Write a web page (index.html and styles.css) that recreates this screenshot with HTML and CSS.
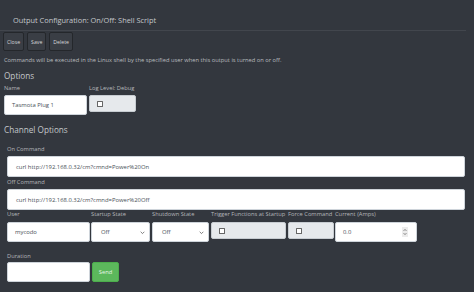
FILE: index.html
```html
<!DOCTYPE html>
<html>
<head>
<meta charset="utf-8">
<link rel="stylesheet" href="styles.css">
</head>
<body>
<div class="page">
  <div class="header">Output Configuration: On/Off: Shell Script</div>
  <div class="toolbar">
    <button class="btn">Close</button>
    <button class="btn">Save</button>
    <button class="btn">Delete</button>
  </div>
  <p class="desc">Commands will be executed in the Linux shell by the specified user when this output is turned on or off.</p>
  <h2 class="heading">Options</h2>
  <div class="row opts">
    <div class="field w-name">
      <label class="lbl">Name</label>
      <div class="input">Tasmota Plug 1</div>
    </div>
    <div class="field w-log">
      <label class="lbl">Log Level: Debug</label>
      <div class="check-box"><span class="cb"></span></div>
    </div>
  </div>
  <h2 class="heading h-channel">Channel Options</h2>
  <div class="channel">
    <label class="lbl l-on">On Command</label>
    <div class="input wide">curl http://192.168.0.32/cm?cmnd=Power%20On</div>
    <label class="lbl l-off">Off Command</label>
    <div class="input wide">curl http://192.168.0.32/cm?cmnd=Power%20Off</div>
    <div class="row fields">
      <div class="field w-user">
        <label class="lbl">User</label>
        <div class="input">mycodo</div>
      </div>
      <div class="field w-start">
        <label class="lbl">Startup State</label>
        <div class="input select">Off<svg class="chev" viewBox="0 0 6 4"><path d="M0.8 0.8 L3 3 L5.2 0.8" fill="none" stroke="#555" stroke-width="0.9"/></svg></div>
      </div>
      <div class="field w-shut">
        <label class="lbl">Shutdown State</label>
        <div class="input select">Off<svg class="chev" viewBox="0 0 6 4"><path d="M0.8 0.8 L3 3 L5.2 0.8" fill="none" stroke="#555" stroke-width="0.9"/></svg></div>
      </div>
      <div class="field w-trig">
        <label class="lbl">Trigger Functions at Startup</label>
        <div class="check-box"><span class="cb"></span></div>
      </div>
      <div class="field w-force">
        <label class="lbl">Force Command</label>
        <div class="check-box"><span class="cb"></span></div>
      </div>
      <div class="field w-cur">
        <label class="lbl">Current (Amps)</label>
        <div class="input number">0.0<span class="spin"><svg viewBox="0 0 6 10"><path d="M1.5 4 L3 2.3 L4.5 4 M1.5 6 L3 7.7 L4.5 6" fill="none" stroke="#777" stroke-width="0.8"/></svg></span></div>
      </div>
    </div>
    <label class="lbl l-dur">Duration</label>
    <div class="row dur">
      <div class="input w-user"></div>
      <button class="btn-send">Send</button>
    </div>
  </div>
</div>
</body>
</html>
```
FILE: styles.css
```css
html, body {
  margin: 0;
  padding: 0;
}
body {
  background: #33373e;
  font-family: "Open Sans", "DejaVu Sans", sans-serif;
  color: #b9bcc0;
  width: 474px;
  height: 292px;
  overflow: hidden;
}
.page {
  width: 466px;
}
.header {
  height: 31px;
  box-sizing: border-box;
  padding: 9px 0 0 13px;
  display: flex;
  align-items: center;
  font-size: 7.4px;
  color: #c4c7cb;
  border-bottom: 1px solid #42464d;
}
.toolbar {
  display: flex;
  gap: 3px;
  padding-left: 3px;
  margin-top: 1px;
}
.btn {
  height: 19px;
  box-sizing: border-box;
  padding: 0 3px;
  font-family: inherit;
  font-size: 5.2px;
  color: #d6d8db;
  background: #3a3e45;
  border: 1px solid #24272b;
  border-radius: 2px;
}
.desc {
  margin: 4px 0 0 4px;
  font-size: 5.75px;
  line-height: 10px;
  color: #b8bbbf;
}
.heading {
  margin: 5px 0 0 4px;
  font-size: 8.2px;
  font-weight: normal;
  line-height: 12px;
  color: #c4c7cb;
}
.h-channel {
  margin-top: 9px;
}
.row {
  display: flex;
}
.opts {
  padding-left: 4px;
  margin-top: 2px;
  gap: 2px;
}
.field {
  display: flex;
  flex-direction: column;
}
.lbl {
  display: block;
  font-size: 5.75px;
  line-height: 8px;
  height: 8px;
  color: #b3b6ba;
  white-space: nowrap;
}
.field .lbl {
  margin-bottom: 3px;
}
.input {
  height: 20px;
  box-sizing: border-box;
  background: #fff;
  border: 1px solid #ced4da;
  border-radius: 2px;
  display: flex;
  align-items: center;
  padding-left: 7px;
  font-size: 5.9px;
  color: #495057;
  position: relative;
}
.check-box {
  height: 17px;
  box-sizing: border-box;
  background: #e6e9ec;
  border: 1px solid #c7ccd1;
  border-radius: 2px;
  padding: 5px 0 0 7px;
}
.cb {
  display: block;
  width: 4px;
  height: 4px;
  border: 0.8px solid #666;
  border-radius: 0.5px;
  background: #fff;
}
.w-name { width: 83px; }
.w-log { width: 47px; }
.channel {
  padding-left: 7px;
}
.l-on { margin-top: 9px; }
.wide {
  width: 458px;
  height: 21px;
  margin-top: 3px;
  padding-left: 8px;
}
.l-off { margin-top: 1px; }
.fields {
  gap: 1px;
}
.fields .lbl {
  margin-bottom: 4px;
}
.w-user { width: 83px; }
.w-start { width: 59px; }
.w-shut { width: 57px; margin-left: 1px; }
.w-trig { width: 75px; margin-left: 1px; }
.w-force { width: 46px; margin-left: 1px; }
.w-cur { width: 82px; }
.select {
  padding-left: 9px;
}
.chev {
  position: absolute;
  right: 4px;
  top: 8px;
  width: 5px;
  height: 3.5px;
}
.number {
  padding-left: 7px;
}
.spin {
  position: absolute;
  right: 8px;
  top: 4px;
  width: 6px;
  height: 10px;
  background: #ececec;
}
.spin svg {
  display: block;
  width: 6px;
  height: 10px;
}
.l-dur {
  margin-top: 10px;
}
.dur {
  margin-top: 2px;
  gap: 2px;
}
.btn-send {
  width: 27px;
  height: 20px;
  box-sizing: border-box;
  background: #5cb85c;
  border: 1px solid #4cae4c;
  border-radius: 2px;
  color: #e8f5e8;
  font-family: inherit;
  font-size: 5.8px;
  padding: 0;
}
```
